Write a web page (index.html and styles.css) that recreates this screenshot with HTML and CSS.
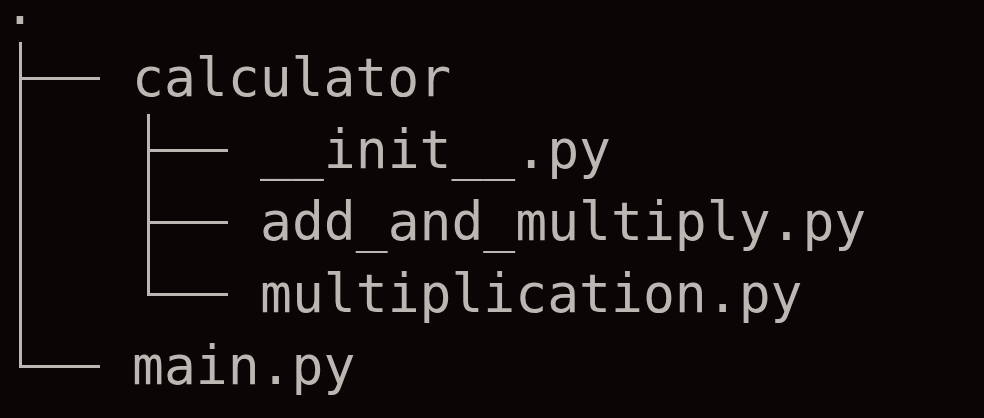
FILE: index.html
```html
<!DOCTYPE html>
<html>
<head>
<meta charset="utf-8">
<link rel="stylesheet" href="styles.css">
</head>
<body>
<div class="tree">
  <div class="row root"><span class="name">.</span></div>
  <div class="row"><span class="branch tee first"></span><span class="name">calculator</span></div>
  <div class="row"><span class="branch pipe"></span><span class="branch tee"></span><span class="name">__init__.py</span></div>
  <div class="row"><span class="branch pipe"></span><span class="branch tee"></span><span class="name">add_and_multiply.py</span></div>
  <div class="row"><span class="branch pipe"></span><span class="branch elbow"></span><span class="name">multiplication.py</span></div>
  <div class="row"><span class="branch elbow"></span><span class="name">main.py</span></div>
</div>
</body>
</html>
```
FILE: styles.css
```css
html, body {
  margin: 0;
  padding: 0;
  background: #0b0606;
  height: 100%;
  overflow: hidden;
}
.tree {
  padding-left: 4px;
  font-family: "DejaVu Sans Mono", monospace;
  font-size: 53px;
  color: #bbb8b4;
}
.row {
  display: flex;
  height: 72px;
  line-height: 72px;
  white-space: pre;
}
.root {
  height: 42px;
  line-height: 12px;
  align-items: flex-start;
}
.branch {
  width: 128px;
  height: 72px;
  flex: none;
  background-repeat: no-repeat;
}
.pipe {
  background-image: linear-gradient(#bbb8b4, #bbb8b4);
  background-position: 15px 0;
  background-size: 3px 100%;
}
.tee {
  background-image: linear-gradient(#bbb8b4, #bbb8b4), linear-gradient(#bbb8b4, #bbb8b4);
  background-position: 15px 0, 15px 35px;
  background-size: 3px 100%, 81px 3px;
}
.elbow {
  background-image: linear-gradient(#bbb8b4, #bbb8b4), linear-gradient(#bbb8b4, #bbb8b4);
  background-position: 15px 0, 15px 35px;
  background-size: 3px 38px, 81px 3px;
}
```
